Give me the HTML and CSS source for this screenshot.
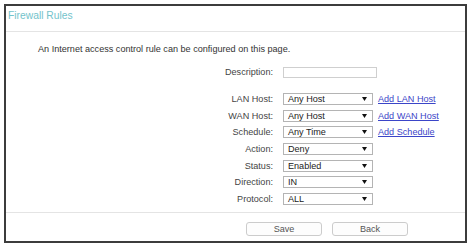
FILE: index.html
```html
<!DOCTYPE html>
<html>
<head>
<meta charset="utf-8">
<link rel="stylesheet" href="styles.css">
</head>
<body>
<div class="panel">
  <div class="header"><span class="title">Firewall Rules</span></div>
  <p class="intro">An Internet access control rule can be configured on this page.</p>
  <div class="row desc-row">
    <span class="label">Description:</span>
    <span class="input"></span>
  </div>
  <div class="rows">
    <div class="row"><span class="label">LAN Host:</span><span class="sel"><span class="val">Any Host</span><svg class="arrow" width="5" height="4" viewBox="0 0 5 4"><path d="M0 0H5L2.5 4Z" fill="#111"/></svg></span><a class="link" href="#">Add LAN Host</a></div>
    <div class="row"><span class="label">WAN Host:</span><span class="sel"><span class="val">Any Host</span><svg class="arrow" width="5" height="4" viewBox="0 0 5 4"><path d="M0 0H5L2.5 4Z" fill="#111"/></svg></span><a class="link" href="#">Add WAN Host</a></div>
    <div class="row"><span class="label">Schedule:</span><span class="sel"><span class="val">Any Time</span><svg class="arrow" width="5" height="4" viewBox="0 0 5 4"><path d="M0 0H5L2.5 4Z" fill="#111"/></svg></span><a class="link" href="#">Add Schedule</a></div>
    <div class="row"><span class="label">Action:</span><span class="sel"><span class="val">Deny</span><svg class="arrow" width="5" height="4" viewBox="0 0 5 4"><path d="M0 0H5L2.5 4Z" fill="#111"/></svg></span></div>
    <div class="row"><span class="label">Status:</span><span class="sel"><span class="val">Enabled</span><svg class="arrow" width="5" height="4" viewBox="0 0 5 4"><path d="M0 0H5L2.5 4Z" fill="#111"/></svg></span></div>
    <div class="row"><span class="label">Direction:</span><span class="sel"><span class="val">IN</span><svg class="arrow" width="5" height="4" viewBox="0 0 5 4"><path d="M0 0H5L2.5 4Z" fill="#111"/></svg></span></div>
    <div class="row"><span class="label">Protocol:</span><span class="sel"><span class="val">ALL</span><svg class="arrow" width="5" height="4" viewBox="0 0 5 4"><path d="M0 0H5L2.5 4Z" fill="#111"/></svg></span></div>
  </div>
  <div class="footer">
    <button class="btn">Save</button>
    <button class="btn">Back</button>
  </div>
</div>
</body>
</html>
```
FILE: styles.css
```css
html, body {
  margin: 0;
  padding: 0;
  background: #ffffff;
}
body {
  font-family: "Liberation Sans", Arial, sans-serif;
  font-size: 9.1px;
  color: #333333;
}
.panel {
  margin: 4px 0 0 4px;
  width: 463px;
  height: 239px;
  box-sizing: border-box;
  border: 2px solid #3c3c3c;
  background: #ffffff;
}
.header {
  height: 26px;
  border-bottom: 1px solid #e4e4e4;
  padding: 3px 0 0 2px;
  box-sizing: border-box;
}
.title {
  font-size: 10.3px;
  line-height: 13px;
  color: #73c3cb;
}
.intro {
  margin: 11px 0 0 32px;
  line-height: 12px;
  color: #333333;
}
.row {
  display: flex;
  align-items: center;
  height: 16.67px;
}
.desc-row {
  margin-top: 9px;
}
.rows {
  margin-top: 10px;
}
.label {
  width: 267px;
  margin-right: 10px;
  text-align: right;
  color: #444444;
  line-height: 12px;
}
.input {
  width: 94px;
  height: 11px;
  box-sizing: border-box;
  border: 1px solid #cfcfcf;
  background: #ffffff;
}
.sel {
  width: 90px;
  height: 12px;
  box-sizing: border-box;
  border: 1px solid #b4b4b4;
  background: #ffffff;
  display: flex;
  align-items: center;
  justify-content: space-between;
  padding: 0 5px 0 4px;
  color: #222222;
  line-height: 10px;
}
.arrow {
  display: block;
}
.link {
  margin-left: 5px;
  color: #3b45c8;
  text-decoration: underline;
  line-height: 12px;
}
.footer {
  margin-top: 5px;
  border-top: 1px solid #e4e4e4;
  padding: 9px 0 0 240px;
  display: flex;
  gap: 10px;
}
.btn {
  width: 76px;
  height: 14px;
  box-sizing: border-box;
  border: 1px solid #cccccc;
  border-radius: 3px;
  background: #fdfdfd;
  font-family: "Liberation Sans", Arial, sans-serif;
  font-size: 9.1px;
  color: #555555;
  padding: 0;
  line-height: 12px;
}
```
